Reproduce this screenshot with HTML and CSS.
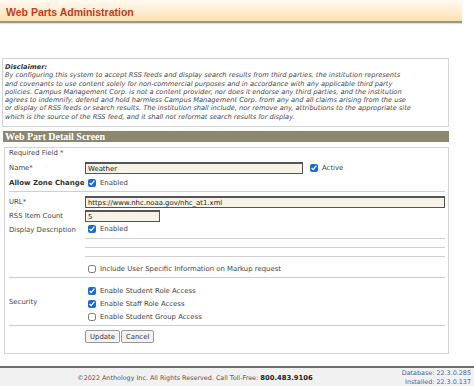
FILE: index.html
```html
<!DOCTYPE html>
<html lang="en">
<head>
    <meta charset="UTF-8">
    <title>Web Parts Administration</title>
    <link rel="stylesheet" href="styles.css">
</head>
<body>
    <div class="page-title">
        <h1>Web Parts Administration</h1>
    </div>

    <div class="disclaimer">
        <b>Disclaimer:</b><br>
        By configuring this system to accept RSS feeds and display search results from third parties, the institution represents<br>
        and covenants to use content solely for non-commercial purposes and in accordance with any applicable third party<br>
        policies. Campus Management Corp. is not a content provider, nor does it endorse any third parties, and the institution<br>
        agrees to indemnify, defend and hold harmless Campus Management Corp. from any and all claims arising from the use<br>
        or display of RSS feeds or search results. The institution shall include, nor remove any, attributions to the appropriate site<br>
        which is the source of the RSS feed, and it shall not reformat search results for display.
    </div>

    <div class="section-head">Web Part Detail Screen</div>

    <div class="detail-box">
        <div class="row row-req">
            <div class="label">Required Field *</div>
        </div>
        <div class="row row-name">
            <div class="label">Name*</div>
            <div class="field">
                <input type="text" class="txt txt-name" value="Weather">
                <label class="chk chk-active"><input type="checkbox" checked> Active</label>
            </div>
        </div>
        <div class="row row-zone">
            <div class="label strong">Allow Zone Change</div>
            <div class="field">
                <label class="chk"><input type="checkbox" checked> Enabled</label>
            </div>
        </div>
        <div class="sep"></div>
        <div class="row row-input">
            <div class="label">URL*</div>
            <div class="field">
                <input type="text" class="txt txt-url" value="https://www.nhc.noaa.gov/nhc_at1.xml">
            </div>
        </div>
        <div class="row row-input">
            <div class="label">RSS Item Count</div>
            <div class="field">
                <input type="text" class="txt txt-count" value="5">
            </div>
        </div>
        <div class="row row-desc">
            <div class="label">Display Description</div>
            <div class="field">
                <label class="chk"><input type="checkbox" checked> Enabled</label>
                <div class="blank first"></div>
                <div class="blank"></div>
                <div class="blank"></div>
                <label class="chk chk-markup"><input type="checkbox"> Include User Specific Information on Markup request</label>
            </div>
        </div>
        <div class="sep"></div>
        <div class="row row-security">
            <div class="label">Security</div>
            <div class="field">
                <label class="chk line"><input type="checkbox" checked> Enable Student Role Access</label>
                <label class="chk line"><input type="checkbox" checked> Enable Staff Role Access</label>
                <label class="chk line"><input type="checkbox"> Enable Student Group Access</label>
            </div>
        </div>
        <div class="sep"></div>
        <div class="row row-buttons">
            <div class="label"></div>
            <div class="field">
                <button class="btn">Update</button><button class="btn">Cancel</button>
            </div>
        </div>
    </div>

    <div class="footer">
        <div class="footer-copy">&copy;2022 Anthology Inc. All Rights Reserved. Call Toll-Free: <b>800.483.9106</b></div>
        <div class="footer-version">
            Database: 22.3.0.285<br>
            Installed: 22.3.0.137
        </div>
    </div>
</body>
</html>
```

FILE: styles.css
```css
body {
    margin: 0;
    padding: 0;
    background-color: #fff;
    font-family: "DejaVu Sans", Verdana, sans-serif;
    font-size: 6.9px;
    color: #444;
}

/* page title bar */
.page-title {
    width: 462px;
    height: 21px;
    background: linear-gradient(to bottom, #fffaf2 0%, #fee9c6 70%, #fde0b0 100%);
    border-bottom: 2px solid #9c987c;
    box-shadow: 0 1px 1px rgba(0,0,0,0.12);
}
.page-title h1 {
    margin: 0;
    padding: 6px 0 0 6px;
    font-family: "Liberation Sans", Arial, sans-serif;
    font-size: 10.5px;
    font-weight: bold;
    color: #c13c16;
}

/* disclaimer */
.disclaimer {
    margin: 35px 0 0 2px;
    width: 440px;
    padding: 4px 3px 5px 2px;
    border: 1px solid #d4d4d4;
    font-size: 6.65px;
    font-style: italic;
    line-height: 8.3px;
    white-space: nowrap;
    color: #454545;
}
.disclaimer b {
    color: #333;
}

/* section header */
.section-head {
    margin: 4px 0 0 3px;
    width: 444px;
    height: 11px;
    padding-left: 2px;
    background-color: #8b8871;
    color: #fff;
    font-family: "Liberation Serif", "Times New Roman", serif;
    font-size: 10px;
    font-weight: bold;
    line-height: 11px;
}

/* detail form */
.detail-box {
    margin: 5px 0 0 4px;
    width: 436px;
    padding: 0 3px 10px 4px;
    border: 1px solid #d4d4d4;
}
.row {
    display: flex;
    align-items: center;
}
.label {
    width: 76px;
    flex-shrink: 0;
    white-space: nowrap;
}
.label.strong {
    font-weight: bold;
    color: #333;
    font-size: 7px;
}
.field {
    flex: 1;
    display: flex;
    align-items: center;
}
.row-req {
    height: 10px;
}
.row-name {
    height: 18px;
    padding-top: 2px;
    box-sizing: border-box;
}
.row-zone {
    height: 13px;
}
.row-input {
    height: 13px;
    padding-top: 1px;
    box-sizing: border-box;
}
.row-input + .row-input {
    height: 14px;
    padding-top: 2px;
}
.sep {
    margin: 2px 0 3px 0;
    border-top: 1px solid #cfcfcf;
}

.txt {
    box-sizing: border-box;
    height: 12px;
    margin: 0;
    padding: 0 2px;
    background-color: #f4f3e6;
    border: 1px solid #555;
    border-top-width: 2px;
    font-family: "DejaVu Sans", Verdana, sans-serif;
    font-size: 6.9px;
    color: #222;
    outline: none;
}
.txt-name {
    width: 218px;
}
.txt-url {
    width: 360px;
}
.txt-count {
    width: 75px;
}

.chk {
    display: flex;
    align-items: center;
    white-space: nowrap;
}
.chk input {
    width: 8px;
    height: 8px;
    margin: 0 4px 0 3px;
    accent-color: #1b6ad6;
}
.chk-active {
    margin-left: 4px;
}

.row-desc {
    align-items: flex-start;
    padding-top: 1px;
}
.row-desc .label {
    padding-top: 3px;
}
.row-desc .field {
    flex-direction: column;
    align-items: stretch;
}
.row-desc .field > .chk:first-child {
    height: 12px;
}
.blank {
    height: 8px;
    border-bottom: 1px solid #cfcfcf;
}
.blank.first {
    height: 3px;
}
.chk-markup {
    height: 13px;
    margin-top: 5px;
}

.row-security .field {
    flex-direction: column;
    align-items: flex-start;
    padding-top: 3px;
}
.chk.line {
    height: 13px;
}

.row-buttons {
    padding-top: 1px;
}
.btn {
    height: 13px;
    margin: 0 1px 0 0;
    padding: 0 4px;
    background-color: #f2f2f2;
    border: 1px solid #999;
    border-radius: 2px;
    font-family: "DejaVu Sans", Verdana, sans-serif;
    font-size: 6.9px;
    color: #333;
}

/* footer */
.footer {
    margin-top: 12px;
    display: flex;
    align-items: center;
    height: 19px;
    background-color: #f1f1f1;
    border-top: 2px solid #707070;
    font-size: 6.4px;
}
.footer-copy {
    flex: 1;
    text-align: center;
    padding-right: 9px;
    color: #555;
}
.footer-copy b {
    color: #222;
    font-size: 6.8px;
}
.footer-version {
    width: 72px;
    padding-right: 3px;
    text-align: right;
    line-height: 8.6px;
    color: #5060a0;
}
```
